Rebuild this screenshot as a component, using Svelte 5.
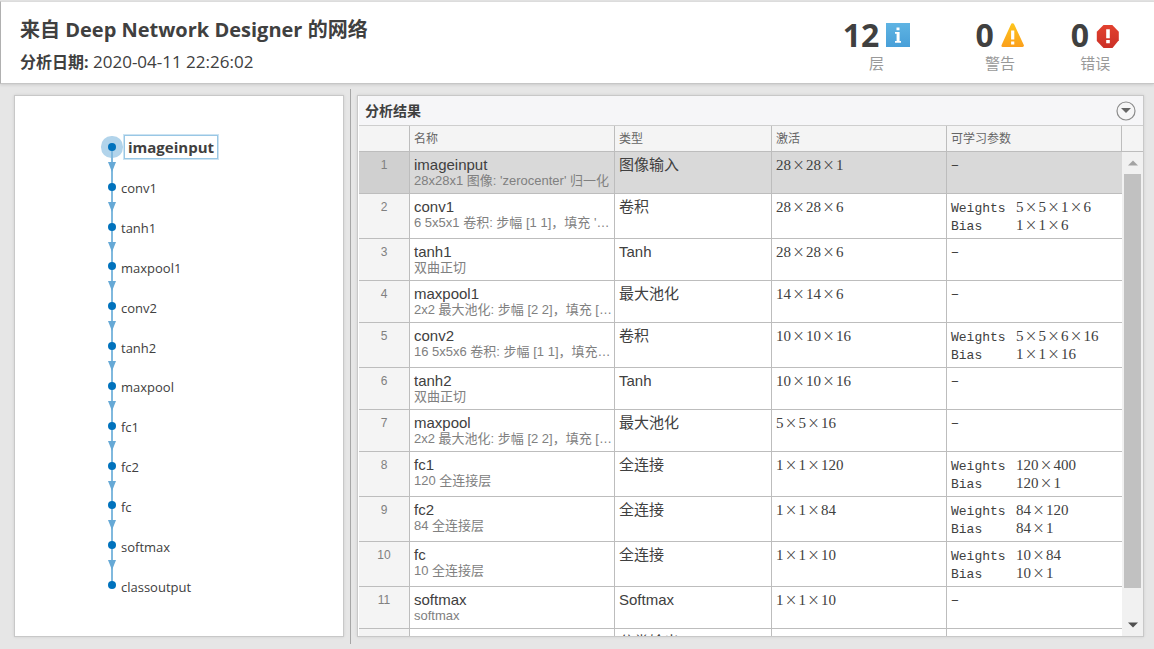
<script>
  const layers = [
    { name: 'imageinput', detail: "28x28x1 图像: 'zerocenter' 归一化", type: '图像输入', activation: '28×28×1' },
    { name: 'conv1', detail: "6 5x5x1 卷积: 步幅 [1 1]，填充 'same'", type: '卷积', activation: '28×28×6', weights: '5×5×1×6', bias: '1×1×6' },
    { name: 'tanh1', detail: '双曲正切', type: 'Tanh', activation: '28×28×6' },
    { name: 'maxpool1', detail: '2x2 最大池化: 步幅 [2 2]，填充 [0 0 0 0]', type: '最大池化', activation: '14×14×6' },
    { name: 'conv2', detail: '16 5x5x6 卷积: 步幅 [1 1]，填充 [0 0 0 0]', type: '卷积', activation: '10×10×16', weights: '5×5×6×16', bias: '1×1×16' },
    { name: 'tanh2', detail: '双曲正切', type: 'Tanh', activation: '10×10×16' },
    { name: 'maxpool', detail: '2x2 最大池化: 步幅 [2 2]，填充 [0 0 0 0]', type: '最大池化', activation: '5×5×16' },
    { name: 'fc1', detail: '120 全连接层', type: '全连接', activation: '1×1×120', weights: '120×400', bias: '120×1' },
    { name: 'fc2', detail: '84 全连接层', type: '全连接', activation: '1×1×84', weights: '84×120', bias: '84×1' },
    { name: 'fc', detail: '10 全连接层', type: '全连接', activation: '1×1×10', weights: '10×84', bias: '10×1' },
    { name: 'softmax', detail: 'softmax', type: 'Softmax', activation: '1×1×10' },
    { name: 'classoutput', detail: 'crossentropyex', type: '分类输出', activation: '-' }
  ];

  let selected = $state(0);
  let scroller;

  function scrollRows(amount) {
    scroller.scrollBy({ top: amount });
  }
</script>

{#snippet dims(text)}
  <span class="dims">{#each text.split('×') as part, i}{#if i > 0}<span class="times">×</span>{/if}{part}{/each}</span>
{/snippet}

<div class="page">
  <header class="top">
    <div class="heading">
      <h1>来自 Deep Network Designer 的网络</h1>
      <p><b>分析日期:</b> 2020-04-11 22:26:02</p>
    </div>
    <div class="stats">
      <div class="stat wide">
        <div class="count">
          12
          <svg width="24" height="24" viewBox="0 0 24 24" aria-hidden="true">
            <defs>
              <linearGradient id="blue" x1="0" y1="0" x2="0" y2="1">
                <stop offset="0" stop-color="#5fb4e3" /><stop offset="1" stop-color="#489fd8" />
              </linearGradient>
            </defs>
            <rect width="24" height="24" fill="url(#blue)" />
            <path d="M10.5 4.5h3v2.7h-3zM9 9h4.6v9H15v1.7H9V18h1.6v-7.300H9z" fill="#fff" />
          </svg>
        </div>
        <div class="caption">层</div>
      </div>
      <div class="stat">
        <div class="count">
          0
          <svg width="24" height="24" viewBox="0 0 24 24" aria-hidden="true">
            <defs>
              <linearGradient id="amber" x1="0" y1="0" x2="0" y2="1">
                <stop offset="0" stop-color="#fdc51c" /><stop offset="1" stop-color="#fb9f1c" />
              </linearGradient>
            </defs>
            <path d="M11.500 .3Q12.800 .3 13.400 1.700L22.800 22Q23.400 24 21.500 24H1.800Q0 24 .6 22L9.800 1.700Q10.300 .3 11.500 .3z" fill="url(#amber)" />
            <path d="M10.100 7.500h3.200v9h-3.200zM10.100 18.500h3.200v3h-3.200z" fill="#fff" />
          </svg>
        </div>
        <div class="caption">警告</div>
      </div>
      <div class="stat">
        <div class="count">
          0
          <svg width="24" height="24" viewBox="0 0 24 24" aria-hidden="true">
            <defs>
              <linearGradient id="red" x1="0" y1="0" x2="0" y2="1">
                <stop offset="0" stop-color="#e2412f" /><stop offset="1" stop-color="#cb3027" />
              </linearGradient>
            </defs>
            <path d="M7.500 2h8.800l6.500 6.700v8.600L16.500 25H7.500L.8 18V8.700z" fill="url(#red)" />
            <path d="M10.200 6.200h3.600v9h-3.600zM10.200 17h3.600v3.200h-3.600z" fill="#fff" />
          </svg>
        </div>
        <div class="caption">错误</div>
      </div>
    </div>
  </header>

  <main>
    <section class="graph" aria-label="网络">
      <ol>
        {#each layers as layer, i}
          <li class:selected={i === selected}>
            <div class="track">
              {#if i < layers.length - 1}
                <span class="edge"></span>
                <svg class="arrow" width="8" height="10" viewBox="0 0 8 10" aria-hidden="true">
                  <path d="M0 0h8L4 10z" fill="#66a9d6" />
                </svg>
              {/if}
              <span class="node"></span>
            </div>
            <button type="button" onclick={() => (selected = i)}>{layer.name}</button>
          </li>
        {/each}
      </ol>
    </section>

    <div class="divider"></div>

    <section class="results">
      <div class="bar">
        <h2>分析结果</h2>
        <button type="button" class="menu" aria-label="选项">
          <svg width="20" height="20" viewBox="0 0 20 20" aria-hidden="true">
            <circle cx="10" cy="10" r="9" fill="#f6f6f7" stroke="#8c8c8c" stroke-width="1.200" />
            <path d="M5 7h10l-5 5z" fill="#666" />
          </svg>
        </button>
      </div>
      <div class="body">
        <div class="scroller" bind:this={scroller}>
          <table>
            <colgroup>
              <col class="c-index" /><col class="c-name" /><col class="c-type" /><col class="c-act" /><col />
            </colgroup>
            <thead>
              <tr><th></th><th>名称</th><th>类型</th><th>激活</th><th>可学习参数</th></tr>
            </thead>
            <tbody>
              {#each layers as layer, i}
                <tr class:selected={i === selected} class:tall={layer.weights} onclick={() => (selected = i)}>
                  <td class="index">{i + 1}</td>
                  <td class="title">
                    <div class="name">{layer.name}</div>
                    <div class="detail">{layer.detail}</div>
                  </td>
                  <td>{layer.type}</td>
                  <td>{@render dims(layer.activation)}</td>
                  <td>
                    {#if layer.weights}
                      <div class="params">
                        <span class="key">Weights</span>{@render dims(layer.weights)}
                        <span class="key">Bias</span>{@render dims(layer.bias)}
                      </div>
                    {:else}
                      <span class="key">−</span>
                    {/if}
                  </td>
                </tr>
              {/each}
            </tbody>
          </table>
        </div>
        <div class="side">
          <div class="corner"></div>
          <button type="button" class="step" aria-label="向上" onclick={() => scrollRows(-42)}>
            <svg width="10" height="6" viewBox="0 0 10 6" aria-hidden="true"><path d="M0 5.500h10L5 .5z" fill="#a3a3a3" /></svg>
          </button>
          <div class="rail"><div class="thumb"></div></div>
          <button type="button" class="step" aria-label="向下" onclick={() => scrollRows(42)}>
            <svg width="10" height="6" viewBox="0 0 10 6" aria-hidden="true"><path d="M0 .5h10L5 5.500z" fill="#505050" /></svg>
          </button>
        </div>
      </div>
    </section>
  </main>
</div>

<style>
  :global(body) {
    margin: 0;
  }

  .page {
    --ui: 'Open Sans', 'Noto Sans CJK SC', sans-serif;
    box-sizing: border-box;
    height: 100vh;
    display: flex;
    flex-direction: column;
    background: #e6e6e6;
    color: #404040;
    font-family: 'Liberation Sans', 'Noto Sans CJK SC', sans-serif;
    font-size: 15px;
    padding-top: 1px;
  }

  button {
    border: 0;
    padding: 0;
    background: none;
    color: inherit;
    font: inherit;
    cursor: pointer;
  }

  .top {
    display: flex;
    justify-content: space-between;
    box-sizing: border-box;
    height: 83px;
    padding: 14px 34px 0 19px;
    background: #fff;
    border-top: 1px solid #dcdcdc;
    border-bottom: 1px solid #c6c6c6;
    border-left: 1px solid #b0b0b0;
    font-family: var(--ui);
    box-shadow: 0 1px 3px rgba(0, 0, 0, 0.12);
  }

  h1 {
    margin: 0;
    font-size: 20px;
    line-height: 28px;
    font-weight: 700;
  }

  .heading p {
    margin: 6px 0 0;
    font-size: 17px;
    line-height: 24px;
  }

  .heading b {
    font-size: 16px;
  }

  .stats {
    display: flex;
    gap: 46px;
    padding-top: 4px;
  }

  .stat.wide {
    margin-right: 19px;
  }

  .count {
    display: flex;
    align-items: center;
    gap: 7px;
    font-size: 32px;
    line-height: 30px;
    font-weight: 700;
  }

  .count svg {
    overflow: visible;
  }

  .caption {
    margin-top: 3px;
    text-align: center;
    font-size: 15px;
    line-height: 20px;
    color: #999;
  }

  main {
    flex: 1;
    min-height: 0;
    display: flex;
    padding: 5px 10px 5px 14px;
  }

  .graph,
  .results {
    box-sizing: border-box;
    margin: 6px 0 7px;
    background: #fff;
    border: 1px solid #c8c8c8;
    box-shadow: 0 0 3px rgba(0, 0, 0, 0.1);
  }

  .graph {
    flex: 0 0 330px;
  }

  .graph ol {
    box-sizing: border-box;
    height: 100%;
    margin: 0;
    padding: 31px 20px 31px 86px;
    display: flex;
    flex-direction: column;
    list-style: none;
    font-family: var(--ui);
  }

  .graph li {
    flex: 1;
    display: flex;
    align-items: center;
  }

  .track {
    position: relative;
    align-self: stretch;
    display: flex;
    align-items: center;
    justify-content: center;
    width: 22px;
  }

  .node {
    width: 8px;
    height: 8px;
    border-radius: 50%;
    background: #0072bd;
    z-index: 2;
  }

  .selected .node {
    box-shadow: 0 0 0 7px #b2d4eb;
    z-index: 0;
  }

  .edge {
    position: absolute;
    top: 50%;
    left: 10px;
    width: 2px;
    height: 100%;
    background: #80b9de;
    z-index: 1;
  }

  .selected .edge {
    top: calc(50% + 4px);
  }

  .arrow {
    position: absolute;
    top: calc(50% + 15px);
    left: 7px;
    z-index: 1;
  }

  .graph button {
    font-size: 13px;
    line-height: 20px;
    padding: 3px 0 0;
    margin-left: -2px;
  }

  .graph .selected button {
    margin-left: 1px;
    padding: 0 3px;
    border: 1px solid #99c7e5;
    box-shadow: 0 0 0 1px #cce3f2;
    font-size: 15px;
    line-height: 22px;
    font-weight: 700;
  }

  .divider {
    width: 1px;
    margin: 0 6px;
    background: #a6a6a6;
  }

  .results {
    flex: 1;
    min-width: 0;
    display: flex;
    flex-direction: column;
    padding-left: 1px;
  }

  .bar {
    display: flex;
    align-items: center;
    justify-content: space-between;
    height: 29px;
    padding: 0 7px 0 6px;
    background: #f6f6f8;
    border-bottom: 1px solid #cecece;
  }

  h2 {
    margin: 0;
    font-size: 14px;
    line-height: 20px;
    font-weight: 700;
  }

  .menu svg {
    display: block;
  }

  .body {
    flex: 1;
    min-height: 0;
    display: flex;
  }

  .scroller {
    flex: 1;
    min-width: 0;
    overflow-y: auto;
    scrollbar-width: none;
  }

  table {
    width: 100%;
    table-layout: fixed;
    border-collapse: separate;
    border-spacing: 0;
  }

  .c-index {
    width: 51px;
  }
  .c-name {
    width: 205px;
  }
  .c-type {
    width: 157px;
  }
  .c-act {
    width: 175px;
  }

  th {
    position: sticky;
    top: 0;
    box-sizing: border-box;
    height: 26px;
    padding: 0 4px;
    background: #f4f4f4;
    border-right: 1px solid #bdbdbd;
    border-bottom: 1px solid #bdbdbd;
    text-align: left;
    font-size: 12px;
    line-height: 20px;
    font-weight: 400;
    color: #666;
  }

  td {
    box-sizing: border-box;
    height: 42px;
    padding: 4px 4px 0;
    border-right: 1px solid #bdbdbd;
    border-bottom: 1px solid #bdbdbd;
    vertical-align: top;
    line-height: 18px;
  }

  .title {
    padding-right: 0;
  }

  .tall td {
    height: 45px;
  }

  td:last-child {
    border-right: 0;
  }

  tr.selected td {
    background: #d9d9d9;
  }

  td.index {
    background: #f4f4f4;
    text-align: center;
    font-size: 12px;
    color: #808080;
  }

  tr.selected td.index {
    background: #d0d0d0;
  }

  .detail {
    overflow: hidden;
    white-space: nowrap;
    text-overflow: ellipsis;
    font-size: 13px;
    line-height: 16px;
    color: #808080;
  }

  .name,
  .detail {
    height: 17px;
  }

  .dims {
    font-family: 'Liberation Serif', serif;
    font-size: 15px;
  }

  .times {
    display: inline-block;
    width: 15px;
    text-align: center;
    font-family: 'DejaVu Sans', sans-serif;
    font-weight: 200;
    line-height: 16px;
  }

  .key {
    font-family: 'Liberation Mono', monospace;
    font-size: 13px;
  }

  .params {
    display: grid;
    grid-template-columns: 65px 1fr;
    grid-auto-rows: 18px;
    align-items: baseline;
  }

  .side {
    width: 21px;
    display: flex;
    flex-direction: column;
    background: #f1f1f1;
  }

  .corner {
    height: 25px;
    background: #f4f4f4;
    border-bottom: 1px solid #bdbdbd;
  }

  .step {
    height: 22px;
    display: flex;
    align-items: center;
    justify-content: center;
  }

  .rail {
    flex: 1;
    padding: 0 2px;
  }

  .thumb {
    height: 94%;
    background: #c1c1c1;
  }
</style>
